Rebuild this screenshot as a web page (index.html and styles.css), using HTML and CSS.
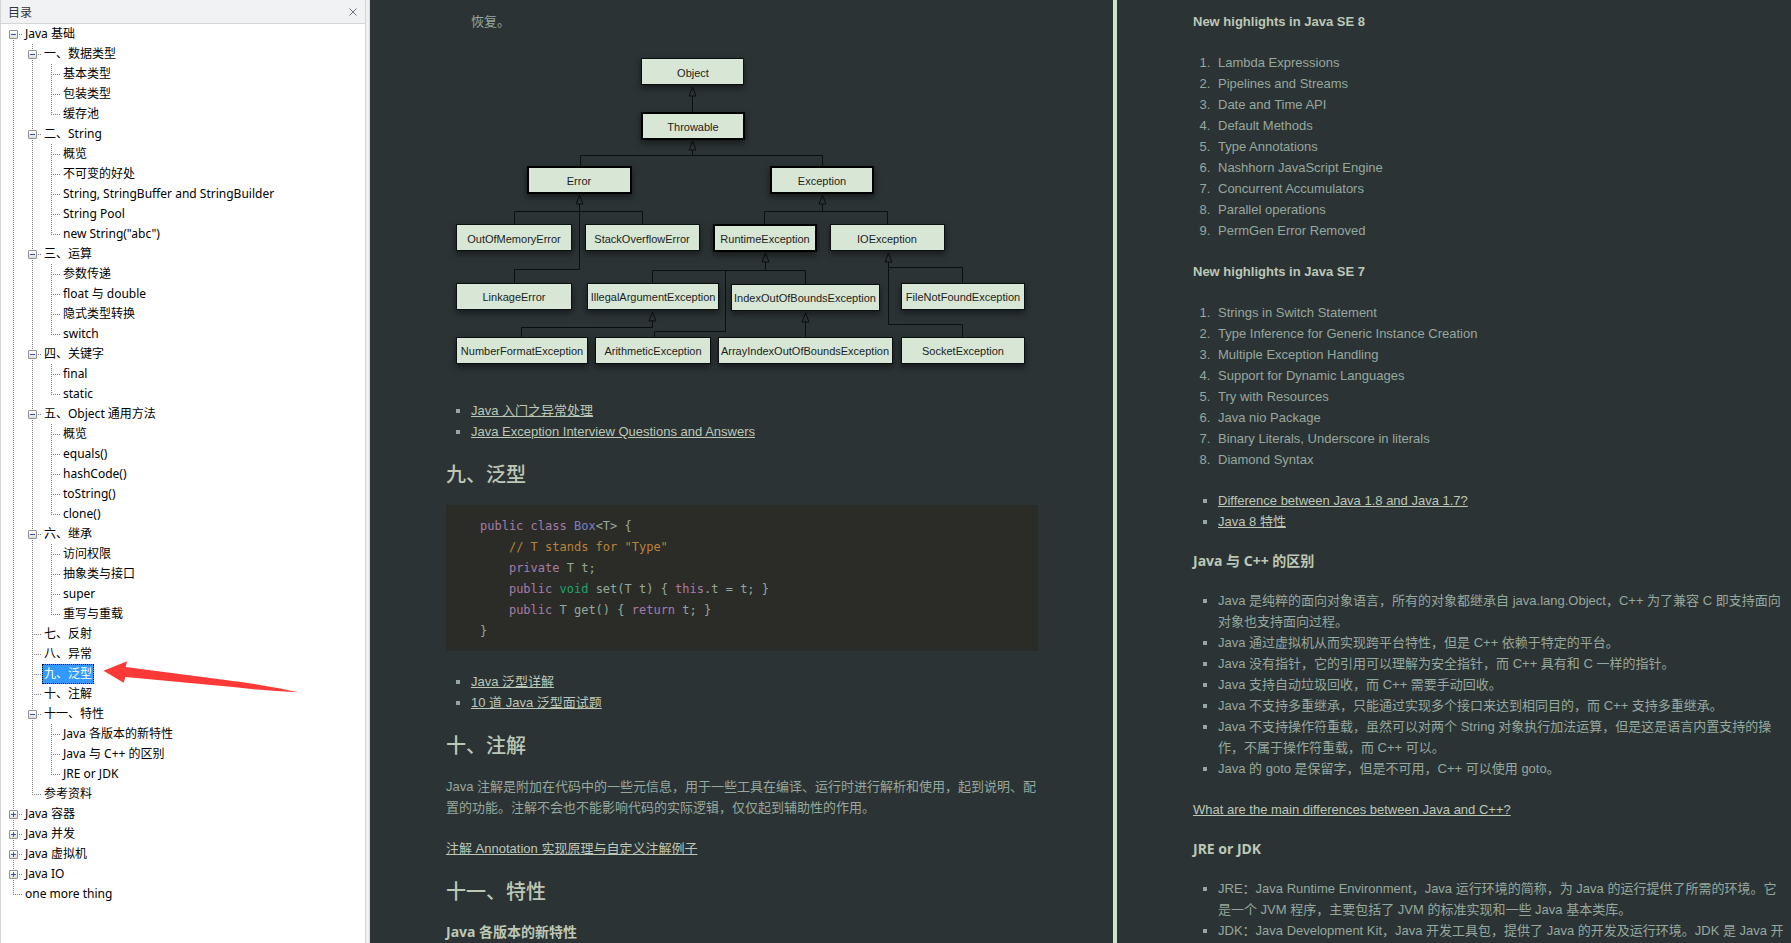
FILE: index.html
```html
<!DOCTYPE html>
<html lang="zh-CN">
<head>
    <meta charset="UTF-8">
    <meta name="viewport" content="width=device-width, initial-scale=1.0">
    <title>Java 基础</title>
    <link rel="stylesheet" href="styles.css">
</head>
<body>
    <aside class="sidebar">
        <header class="sidebar-header">
            <h1>目录</h1>
            <button type="button" class="close-btn" aria-label="关闭">
                <svg width="8" height="8" viewBox="0 0 8 8"><path d="M0.5 0.5L7.5 7.5M7.5 0.5L0.5 7.5"/></svg>
            </button>
        </header>

        <ul class="tree tree-root">
            <li>
                <div class="row"><button type="button" class="toggle" aria-label="折叠"></button><a href="#">Java 基础</a></div>
                <ul class="tree">
                    <li>
                        <div class="row"><button type="button" class="toggle" aria-label="折叠"></button><a href="#">一、数据类型</a></div>
                        <ul class="tree">
                            <li><div class="row"><a href="#">基本类型</a></div></li>
                            <li><div class="row"><a href="#">包装类型</a></div></li>
                            <li><div class="row"><a href="#">缓存池</a></div></li>
                        </ul>
                    </li>
                    <li>
                        <div class="row"><button type="button" class="toggle" aria-label="折叠"></button><a href="#">二、String</a></div>
                        <ul class="tree">
                            <li><div class="row"><a href="#">概览</a></div></li>
                            <li><div class="row"><a href="#">不可变的好处</a></div></li>
                            <li><div class="row"><a href="#">String, StringBuffer and StringBuilder</a></div></li>
                            <li><div class="row"><a href="#">String Pool</a></div></li>
                            <li><div class="row"><a href="#">new String("abc")</a></div></li>
                        </ul>
                    </li>
                    <li>
                        <div class="row"><button type="button" class="toggle" aria-label="折叠"></button><a href="#">三、运算</a></div>
                        <ul class="tree">
                            <li><div class="row"><a href="#">参数传递</a></div></li>
                            <li><div class="row"><a href="#">float 与 double</a></div></li>
                            <li><div class="row"><a href="#">隐式类型转换</a></div></li>
                            <li><div class="row"><a href="#">switch</a></div></li>
                        </ul>
                    </li>
                    <li>
                        <div class="row"><button type="button" class="toggle" aria-label="折叠"></button><a href="#">四、关键字</a></div>
                        <ul class="tree">
                            <li><div class="row"><a href="#">final</a></div></li>
                            <li><div class="row"><a href="#">static</a></div></li>
                        </ul>
                    </li>
                    <li>
                        <div class="row"><button type="button" class="toggle" aria-label="折叠"></button><a href="#">五、Object 通用方法</a></div>
                        <ul class="tree">
                            <li><div class="row"><a href="#">概览</a></div></li>
                            <li><div class="row"><a href="#">equals()</a></div></li>
                            <li><div class="row"><a href="#">hashCode()</a></div></li>
                            <li><div class="row"><a href="#">toString()</a></div></li>
                            <li><div class="row"><a href="#">clone()</a></div></li>
                        </ul>
                    </li>
                    <li>
                        <div class="row"><button type="button" class="toggle" aria-label="折叠"></button><a href="#">六、继承</a></div>
                        <ul class="tree">
                            <li><div class="row"><a href="#">访问权限</a></div></li>
                            <li><div class="row"><a href="#">抽象类与接口</a></div></li>
                            <li><div class="row"><a href="#">super</a></div></li>
                            <li><div class="row"><a href="#">重写与重载</a></div></li>
                        </ul>
                    </li>
                    <li><div class="row"><a href="#">七、反射</a></div></li>
                    <li><div class="row"><a href="#">八、异常</a></div></li>
                    <li>
                        <div class="row">
                            <a href="#" class="selected">九、泛型</a>
                            <svg class="pointer" width="196" height="24" viewBox="0 0 196 24"><path d="M0.5 10.7L24 1.3L22.7 7L130 21Q163 25 195.5 32.3Q163 31 130 27L22.3 17L20.7 22.7Z"/></svg>
                        </div>
                    </li>
                    <li><div class="row"><a href="#">十、注解</a></div></li>
                    <li>
                        <div class="row"><button type="button" class="toggle" aria-label="折叠"></button><a href="#">十一、特性</a></div>
                        <ul class="tree">
                            <li><div class="row"><a href="#">Java 各版本的新特性</a></div></li>
                            <li><div class="row"><a href="#">Java 与 C++ 的区别</a></div></li>
                            <li><div class="row"><a href="#">JRE or JDK</a></div></li>
                        </ul>
                    </li>
                    <li><div class="row"><a href="#">参考资料</a></div></li>
                </ul>
            </li>
            <li><div class="row"><button type="button" class="toggle closed" aria-label="展开"></button><a href="#">Java 容器</a></div></li>
            <li><div class="row"><button type="button" class="toggle closed" aria-label="展开"></button><a href="#">Java 并发</a></div></li>
            <li><div class="row"><button type="button" class="toggle closed" aria-label="展开"></button><a href="#">Java 虚拟机</a></div></li>
            <li><div class="row"><button type="button" class="toggle closed" aria-label="展开"></button><a href="#">Java IO</a></div></li>
            <li><div class="row"><a href="#">one more thing</a></div></li>
        </ul>
    </aside>

    <main class="reader">
        <article class="page page-left">
            <ul class="continued">
                <li>恢复。</li>
            </ul>

            <svg class="diagram" viewBox="0 0 590 328" role="img" aria-label="Throwable">
                <g class="lines">
                    <path d="M246.5 44V60M246.5 98V103.5M134.5 114V103.5H376.5V114"/>
                    <path d="M133.5 152V217.5H68.5V231M68.5 173V159.5H196.5V173"/>
                    <path d="M376.5 152V159.5M318.5 173V159.5H441.5V173"/>
                    <path d="M319.5 210V218.5M206.5 231V218.5H359.5V232M279.5 218.5V279.5H208.5V285"/>
                    <path d="M442.5 210V272.5H516.5V285M442.5 215.5H516.5V231"/>
                    <path d="M206.5 268V275.5H75.5V285M359.5 269V285"/>
                    <path d="M246.5 35L250 44H243ZM246.5 89L250 98H243ZM133.5 143L137 152H130ZM376.5 143L380 152H373Z"/>
                    <path d="M319.5 201L323 210H316ZM442.5 201L446 210H439ZM206.5 260L210 269H203ZM359.5 261L363 270H356Z"/>
                </g>
                <g class="nodes">
                    <rect x="195.5" y="6.5" width="102" height="26"/>
                    <rect class="bold" x="196" y="61" width="102" height="26"/>
                    <rect class="bold" x="82" y="115" width="103" height="26"/>
                    <rect class="bold" x="325" y="115" width="102" height="26"/>
                    <rect x="10.5" y="172.5" width="115" height="26"/>
                    <rect x="139.5" y="172.5" width="114" height="26"/>
                    <rect class="bold" x="268" y="173" width="102" height="26"/>
                    <rect x="384.5" y="172.5" width="114" height="26"/>
                    <rect x="10.5" y="231.5" width="115" height="26"/>
                    <rect x="141.5" y="231.5" width="131" height="26"/>
                    <rect x="285.5" y="232.5" width="148" height="26"/>
                    <rect x="455.5" y="231.5" width="123" height="26"/>
                    <rect x="10.5" y="285.5" width="131" height="26"/>
                    <rect x="149.5" y="285.5" width="115" height="26"/>
                    <rect x="272.5" y="285.5" width="174" height="26"/>
                    <rect x="455.5" y="285.5" width="123" height="26"/>
                </g>
                <g class="labels">
                    <text x="247" y="25">Object</text>
                    <text x="247" y="79">Throwable</text>
                    <text x="133" y="133">Error</text>
                    <text x="376" y="133">Exception</text>
                    <text x="68" y="191">OutOfMemoryError</text>
                    <text x="196" y="191">StackOverflowError</text>
                    <text x="319" y="191">RuntimeException</text>
                    <text x="441" y="191">IOException</text>
                    <text x="68" y="249">LinkageError</text>
                    <text x="207" y="249">IllegalArgumentException</text>
                    <text x="359" y="250">IndexOutOfBoundsException</text>
                    <text x="517" y="249">FileNotFoundException</text>
                    <text x="76" y="303">NumberFormatException</text>
                    <text x="207" y="303">ArithmeticException</text>
                    <text x="359" y="303">ArrayIndexOutOfBoundsException</text>
                    <text x="517" y="303">SocketException</text>
                </g>
            </svg>

            <ul>
                <li><a href="#">Java 入门之异常处理</a></li>
                <li><a href="#">Java Exception Interview Questions and Answers</a></li>
            </ul>

            <h2>九、泛型</h2>
            <pre><code>
                <span class="line"><span class="kw">public</span> <span class="kw">class</span> <span class="cls">Box</span>&lt;T&gt; {</span>
                <span class="line">    <span class="cmt">// T stands for "Type"</span></span>
                <span class="line">    <span class="kw">private</span> T t;</span>
                <span class="line">    <span class="kw">public</span> <span class="type">void</span> set(T t) { <span class="kw">this</span>.t = t; }</span>
                <span class="line">    <span class="kw">public</span> T get() { <span class="kw">return</span> t; }</span>
                <span class="line">}</span>
            </code></pre>
            <ul>
                <li><a href="#">Java 泛型详解</a></li>
                <li><a href="#">10 道 Java 泛型面试题</a></li>
            </ul>

            <h2>十、注解</h2>
            <p>Java 注解是附加在代码中的一些元信息，用于一些工具在编译、运行时进行解析和使用，起到说明、配置的功能。注解不会也不能影响代码的实际逻辑，仅仅起到辅助性的作用。</p>
            <p><a href="#">注解 Annotation 实现原理与自定义注解例子</a></p>

            <h2>十一、特性</h2>
            <h3>Java 各版本的新特性</h3>
        </article>

        <article class="page page-right">
            <p><strong>New highlights in Java SE 8</strong></p>
            <ol>
                <li>Lambda Expressions</li>
                <li>Pipelines and Streams</li>
                <li>Date and Time API</li>
                <li>Default Methods</li>
                <li>Type Annotations</li>
                <li>Nashhorn JavaScript Engine</li>
                <li>Concurrent Accumulators</li>
                <li>Parallel operations</li>
                <li>PermGen Error Removed</li>
            </ol>
            <p><strong>New highlights in Java SE 7</strong></p>
            <ol>
                <li>Strings in Switch Statement</li>
                <li>Type Inference for Generic Instance Creation</li>
                <li>Multiple Exception Handling</li>
                <li>Support for Dynamic Languages</li>
                <li>Try with Resources</li>
                <li>Java nio Package</li>
                <li>Binary Literals, Underscore in literals</li>
                <li>Diamond Syntax</li>
            </ol>
            <ul>
                <li><a href="#">Difference between Java 1.8 and Java 1.7?</a></li>
                <li><a href="#">Java 8 特性</a></li>
            </ul>

            <h3>Java 与 C++ 的区别</h3>
            <ul>
                <li>Java 是纯粹的面向对象语言，所有的对象都继承自 java.lang.Object，C++ 为了兼容 C 即支持面向对象也支持面向过程。</li>
                <li>Java 通过虚拟机从而实现跨平台特性，但是 C++ 依赖于特定的平台。</li>
                <li>Java 没有指针，它的引用可以理解为安全指针，而 C++ 具有和 C 一样的指针。</li>
                <li>Java 支持自动垃圾回收，而 C++ 需要手动回收。</li>
                <li>Java 不支持多重继承，只能通过实现多个接口来达到相同目的，而 C++ 支持多重继承。</li>
                <li>Java 不支持操作符重载，虽然可以对两个 String 对象执行加法运算，但是这是语言内置支持的操作，不属于操作符重载，而 C++ 可以。</li>
                <li>Java 的 goto 是保留字，但是不可用，C++ 可以使用 goto。</li>
            </ul>
            <p><a href="#">What are the main differences between Java and C++?</a></p>

            <h3>JRE or JDK</h3>
            <ul>
                <li>JRE：Java Runtime Environment，Java 运行环境的简称，为 Java 的运行提供了所需的环境。它是一个 JVM 程序，主要包括了 JVM 的标准实现和一些 Java 基本类库。</li>
                <li>JDK：Java Development Kit，Java 开发工具包，提供了 Java 的开发及运行环境。JDK 是 Java 开</li>
            </ul>
        </article>
    </main>
</body>
</html>
```
FILE: styles.css
```css
* {
    margin: 0;
    padding: 0;
    box-sizing: border-box;
}

:root {
    --page-bg: #2c3335;
    --text-color: #95a89d;
    --heading-color: #bcc8b5;
    --paper-color: #cfe3cb;
    --tree-line: #808080;
}

body {
    display: flex;
    height: 100vh;
    overflow: hidden;
    background: #f0f0f0;
}

/* Sidebar */

.sidebar {
    flex: none;
    width: 366px;
    background: #ffffff;
    border-left: 1px solid #d5d5d5;
    border-right: 1px solid #d5d5d5;
    font-family: "Noto Sans", "Noto Sans CJK SC", sans-serif;
    font-size: 12px;
    color: #000000;
}

.sidebar-header {
    display: flex;
    align-items: center;
    justify-content: space-between;
    height: 24px;
    padding: 0 8px 0 7px;
    background: #f1f2f4;
    border-bottom: 1px solid #d5d5d5;
}

.sidebar-header h1 {
    font-size: 12px;
    font-weight: 400;
    color: #333333;
}

.close-btn {
    display: flex;
    border: none;
    background: none;
    cursor: pointer;
}

.close-btn svg {
    stroke: #6b7480;
}

.tree {
    list-style: none;
    padding-left: 19px;
}

.tree-root {
    padding-left: 8px;
}

/* dotted connectors: one vertical line per branch, one stub per row */
.tree > li {
    background-image:
        repeating-linear-gradient(to bottom, var(--tree-line) 0 1px, transparent 1px 2px),
        repeating-linear-gradient(to right, var(--tree-line) 0 1px, transparent 1px 2px);
    background-repeat: no-repeat;
    background-position: 4px 0, 4px 10px;
    background-size: 1px 100%, 10px 1px;
}

.tree > li:last-child {
    background-size: 1px 11px, 10px 1px;
}

.tree-root > li:first-child {
    background-position: 4px 10px, 4px 10px;
}

.row {
    position: relative;
    display: flex;
    align-items: center;
    height: 20px;
    padding-left: 14px;
}

.row a {
    padding: 0 2px;
    line-height: 20px;
    color: inherit;
    text-decoration: none;
    white-space: nowrap;
}

.row .selected {
    background: #3399ff;
    color: #ffffff;
    outline: 1px dotted #000000;
    outline-offset: -1px;
}

.toggle {
    width: 9px;
    height: 9px;
    margin-left: -14px;
    margin-right: 5px;
    border: 1px solid #919191;
    border-radius: 1px;
    background:
        linear-gradient(#3a55a8, #3a55a8) center / 5px 1px no-repeat,
        linear-gradient(#ffffff, #dddddd);
    cursor: pointer;
}

.toggle.closed {
    background:
        linear-gradient(#3a55a8, #3a55a8) center / 5px 1px no-repeat,
        linear-gradient(#3a55a8, #3a55a8) center / 1px 5px no-repeat,
        linear-gradient(#ffffff, #dddddd);
}

.pointer {
    position: absolute;
    top: -4px;
    left: 75px;
    overflow: visible;
    fill: #fb3a38;
    pointer-events: none;
}

/* Reader */

.reader {
    flex: 1;
    display: grid;
    grid-template-columns: minmax(0, 747fr) minmax(0, 674fr);
    min-width: 0;
    margin-left: 3px;
    background: var(--page-bg);
    border-left: 1px solid var(--paper-color);
    font-family: "Liberation Sans", "Noto Sans CJK SC", sans-serif;
    font-size: 13px;
    line-height: 21px;
    color: var(--text-color);
}

.page {
    overflow: hidden;
    padding-top: 11px;
}

.page-left {
    padding-left: 76px;
    padding-right: 75px;
    border-right: 4px solid var(--paper-color);
}

.page-right {
    padding-left: 76px;
    padding-right: 5px;
}

.page p,
.page ul,
.page ol,
.page pre,
.diagram {
    margin-bottom: 20px;
}

.page ul {
    padding-left: 25px;
    list-style: square;
}

.page .continued {
    list-style: none;
}

.page ol {
    padding-left: 21px;
}

.page ol li {
    padding-left: 4px;
}

.page a,
.page strong {
    color: var(--heading-color);
}

.page h2,
.page h3 {
    color: var(--heading-color);
    font-family: "Noto Sans", "Noto Sans CJK SC", sans-serif;
}

.page h2 {
    margin: -2px 0 15px;
    font-size: 20px;
    font-weight: 500;
    line-height: 30px;
}

.page h3 {
    margin: -1px 0 19px;
    font-size: 14px;
    font-weight: 700;
    line-height: 20px;
}

.page h2 + h3 {
    margin-top: 0;
}

.page pre {
    padding: 11px 34px 9px;
    background: #2b2c28;
    font-family: "DejaVu Sans Mono", monospace;
    font-size: 12px;
    white-space: normal;
}

.page code {
    display: block;
    font: inherit;
}

.page .line {
    display: block;
    white-space: pre;
}

.kw {
    color: #a77ba8;
}

.cls {
    color: #7a7fc4;
}

.cmt {
    color: #b98339;
}

.type {
    color: #1ba56a;
}

.diagram {
    display: block;
    width: 100%;
    max-width: 590px;
}

.lines path {
    fill: none;
    stroke: #0c0f10;
}

.nodes rect {
    fill: #d8e6d5;
    stroke: #0c0f10;
    filter: drop-shadow(0 3px 3px rgba(0, 0, 0, 0.5));
}

.nodes .bold {
    stroke: #000000;
    stroke-width: 2;
}

.labels text {
    font-size: 11px;
    text-anchor: middle;
    fill: #1c1f1c;
}
```
